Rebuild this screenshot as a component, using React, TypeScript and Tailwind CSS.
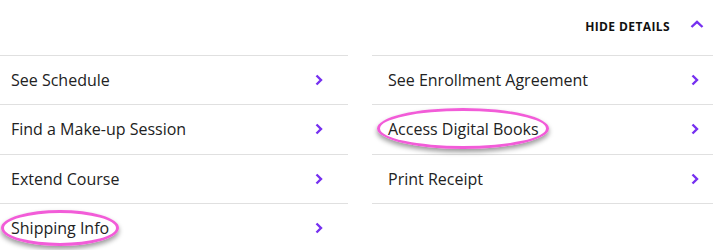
const leftItems = ['See Schedule', 'Find a Make-up Session', 'Extend Course', 'Shipping Info'];
const rightItems = ['See Enrollment Agreement', 'Access Digital Books', 'Print Receipt'];

function Chevron() {
  return (
    <svg width="10" height="12" viewBox="0 0 10 12">
      <path d="M2.5 1.5 L7 6 L2.5 10.5" fill="none" stroke="#7630f0" strokeWidth="2.4" />
    </svg>
  );
}

function UpChevron() {
  return (
    <svg width="14" height="8" viewBox="0 0 14 8">
      <path d="M1.5 7 L7 1.8 L12.5 7" fill="none" stroke="#7630f0" strokeWidth="2.4" />
    </svg>
  );
}

function Row({ label, pad }: { label: string; pad: string }) {
  return (
    <div className={`h-[49.33px] border-t border-[#e0e0e0] flex items-center justify-between ${pad}`}>
      <span className="relative text-[16px] text-[#222]">
        {label === 'Shipping Info' && (
          <span className="absolute -left-[10px] -right-[10px] -top-[6px] -bottom-[6px] rounded-[50%] border-[3px] border-[#f25cd8] shadow-[0_3px_5px_rgba(0,0,0,0.4)]" />
        )}
        {label === 'Access Digital Books' && (
          <span className="absolute -left-[11px] -right-[10px] -top-[9px] -bottom-[8px] rounded-[50%] border-[3px] border-[#f25cd8] shadow-[0_3px_5px_rgba(0,0,0,0.4)]" />
        )}
        <span className="relative">{label}</span>
      </span>
      <Chevron />
    </div>
  );
}

export default function App() {
  return (
    <div className="w-[713px] h-[250px] bg-white overflow-hidden" style={{ fontFamily: '"Open Sans", "Liberation Sans", sans-serif' }}>
      <div className="h-[55px] flex items-center justify-end pr-[9px] pb-[2px]">
        <span className="text-[12px] font-bold tracking-[0.4px] text-[#111] mr-[20px]">HIDE DETAILS</span>
        <span className="mb-[6px]"><UpChevron /></span>
      </div>
      <div className="flex gap-[24px]">
        <div className="w-[348px]">
          {leftItems.map((l, i) => (
            <Row key={i} label={l} pad="pl-[11px] pr-[24px]" />
          ))}
          <div className="border-t border-[#e0e0e0]" />
        </div>
        <div className="flex-1">
          {rightItems.map((l, i) => (
            <Row key={i} label={l} pad="pl-[16px] pr-[13px]" />
          ))}
          <div className="border-t border-[#e0e0e0]" />
        </div>
      </div>
    </div>
  );
}
